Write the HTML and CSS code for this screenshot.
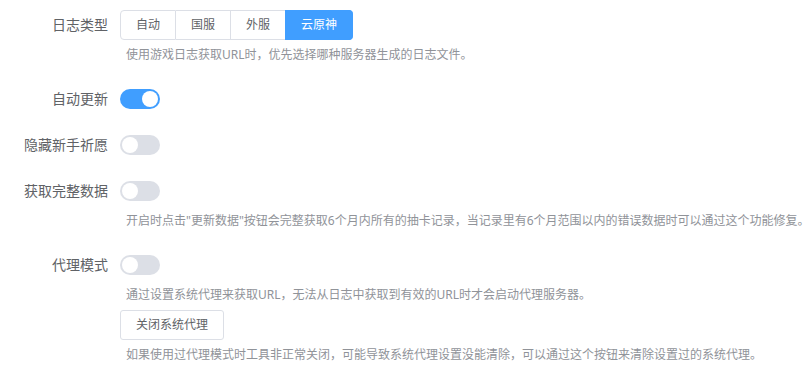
FILE: index.html
```html
<!DOCTYPE html>
<html lang="zh-CN">
<head>
  <meta charset="UTF-8">
  <meta name="viewport" content="width=device-width, initial-scale=1.0">
  <title>设置</title>
  <link rel="stylesheet" href="styles.css">
</head>
<body>
  <form class="settings">
    <!-- 日志类型 -->
    <div class="form-item">
      <label class="form-label">日志类型</label>
      <div class="form-content">
        <div class="form-control">
          <div class="radio-group">
            <span class="radio-btn">自动</span>
            <span class="radio-btn">国服</span>
            <span class="radio-btn">外服</span>
            <span class="radio-btn active">云原神</span>
          </div>
        </div>
        <p class="tip">使用游戏日志获取URL时，优先选择哪种服务器生成的日志文件。</p>
      </div>
    </div>

    <!-- 自动更新 -->
    <div class="form-item">
      <label class="form-label">自动更新</label>
      <div class="form-content">
        <div class="form-control">
          <span class="switch on"></span>
        </div>
      </div>
    </div>

    <!-- 隐藏新手祈愿 -->
    <div class="form-item">
      <label class="form-label">隐藏新手祈愿</label>
      <div class="form-content">
        <div class="form-control">
          <span class="switch"></span>
        </div>
      </div>
    </div>

    <!-- 获取完整数据 -->
    <div class="form-item">
      <label class="form-label">获取完整数据</label>
      <div class="form-content">
        <div class="form-control">
          <span class="switch"></span>
        </div>
        <p class="tip">开启时点击"更新数据"按钮会完整获取6个月内所有的抽卡记录，当记录里有6个月范围以内的错误数据时可以通过这个功能修复。</p>
      </div>
    </div>

    <!-- 代理模式 -->
    <div class="form-item">
      <label class="form-label">代理模式</label>
      <div class="form-content">
        <div class="form-control">
          <span class="switch"></span>
        </div>
        <p class="tip">通过设置系统代理来获取URL，无法从日志中获取到有效的URL时才会启动代理服务器。</p>
        <div class="form-control">
          <button type="button" class="btn">关闭系统代理</button>
        </div>
        <p class="tip">如果使用过代理模式时工具非正常关闭，可能导致系统代理设置没能清除，可以通过这个按钮来清除设置过的系统代理。</p>
      </div>
    </div>
  </form>
</body>
</html>
```

FILE: styles.css
```css
* {
  margin: 0;
  padding: 0;
  box-sizing: border-box;
}
body {
  background: #fff;
  font-family: "Noto Sans", "Noto Sans CJK SC", sans-serif;
  color: #606266;
  overflow: hidden;
}
.settings {
  padding-top: 5px;
}
.form-item {
  display: flex;
  margin-bottom: 6px;
}
.form-label {
  width: 120px;
  height: 40px;
  flex-shrink: 0;
  padding-right: 12px;
  text-align: right;
  font-size: 14px;
  line-height: 40px;
  color: #606266;
}
.form-content {
  flex: 1;
}
.form-control {
  display: flex;
  align-items: center;
  height: 40px;
}
.tip {
  height: 20px;
  padding-left: 6px;
  font-size: 12px;
  line-height: 20px;
  color: #909399;
  white-space: nowrap;
}
.tip:last-child {
  margin-bottom: 8px;
}
.radio-group {
  display: flex;
}
.radio-btn {
  height: 30px;
  padding: 8px 15px;
  font-size: 12px;
  line-height: 12px;
  border: 1px solid #dcdfe6;
  border-left: 0;
  background: #fff;
  color: #606266;
}
.radio-btn:first-child {
  border-left: 1px solid #dcdfe6;
  border-radius: 4px 0 0 4px;
}
.radio-btn:last-child {
  border-radius: 0 4px 4px 0;
}
.radio-btn.active {
  background: #409eff;
  border-color: #409eff;
  color: #fff;
  box-shadow: -1px 0 0 0 #409eff;
}
.switch {
  position: relative;
  width: 40px;
  height: 20px;
  border-radius: 10px;
  background: #dcdfe6;
}
.switch::after {
  content: "";
  position: absolute;
  top: 2px;
  left: 2px;
  width: 16px;
  height: 16px;
  border-radius: 50%;
  background: #fff;
}
.switch.on {
  background: #409eff;
}
.switch.on::after {
  left: 22px;
}
.btn {
  height: 30px;
  padding: 0 15px;
  font-family: inherit;
  font-size: 12px;
  line-height: 28px;
  color: #606266;
  background: #fff;
  border: 1px solid #dcdfe6;
  border-radius: 3px;
  cursor: pointer;
}
```
